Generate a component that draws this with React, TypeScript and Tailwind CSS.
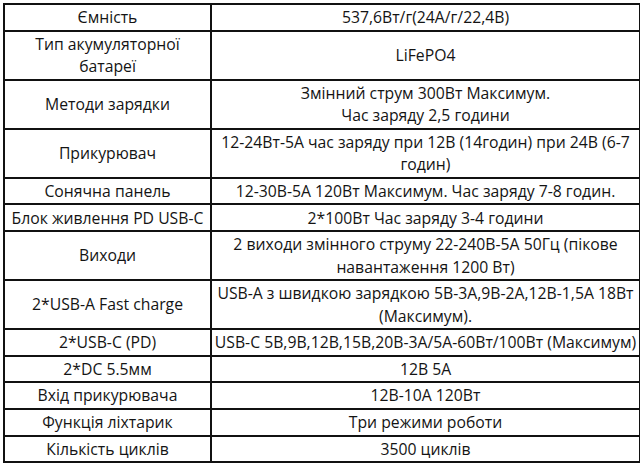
import { Fragment } from 'react'

const rows: [string[], string[]][] = [
  [['Ємність'], ['537,6Вт/г(24А/г/22,4В)']],
  [['Тип акумуляторної', 'батареї'], ['LiFePO4']],
  [['Методи зарядки'], ['Змінний струм 300Вт Максимум.', 'Час заряду 2,5 години']],
  [['Прикурювач'], ['12-24Вт-5А час заряду при 12В (14годин) при 24В (6-7', 'годин)']],
  [['Сонячна панель'], ['12-30В-5А 120Вт Максимум. Час заряду 7-8 годин.']],
  [['Блок живлення PD USB-C'], ['2*100Вт Час заряду 3-4 години']],
  [['Виходи'], ['2 виходи змінного струму 22-240В-5А 50Гц (пікове', 'навантаження 1200 Вт)']],
  [['2*USB-A Fast charge'], ['USB-A з швидкою зарядкою 5В-3А,9В-2А,12В-1,5А 18Вт', '(Максимум).']],
  [['2*USB-C (PD)'], ['USB-C 5В,9В,12В,15В,20В-3А/5А-60Вт/100Вт (Максимум)']],
  [['2*DC 5.5мм'], ['12В 5А']],
  [['Вхід прикурювача'], ['12В-10А 120Вт']],
  [['Функція ліхтарик'], ['Три режими роботи']],
  [['Кількість циклів'], ['3500 циклів']],
]

function Lines({ lines }: { lines: string[] }) {
  return (
    <>
      {lines.map((line, i) => (
        <Fragment key={line}>
          {i > 0 && <br />}
          {line}
        </Fragment>
      ))}
    </>
  )
}

export default function App() {
  return (
    <div className="w-[640px] h-[464px] overflow-hidden bg-white pl-[3px] pt-[3px] font-['Open_Sans',sans-serif] text-[15.75px] leading-[22.5px] text-[#141414]">
      <table className="w-[636px] border-collapse table-fixed">
        <colgroup>
          <col className="w-[207px]" />
          <col className="w-[429px]" />
        </colgroup>
        <tbody>
          {rows.map(([label, value]) => (
            <tr key={label[0]}>
              <td className="border-2 border-[#111] px-1 py-[1.05px] text-center whitespace-nowrap">
                <Lines lines={label} />
              </td>
              <td className="border-2 border-[#111] px-0 py-[1.05px] text-center whitespace-nowrap overflow-hidden">
                <Lines lines={value} />
              </td>
            </tr>
          ))}
        </tbody>
      </table>
    </div>
  )
}
